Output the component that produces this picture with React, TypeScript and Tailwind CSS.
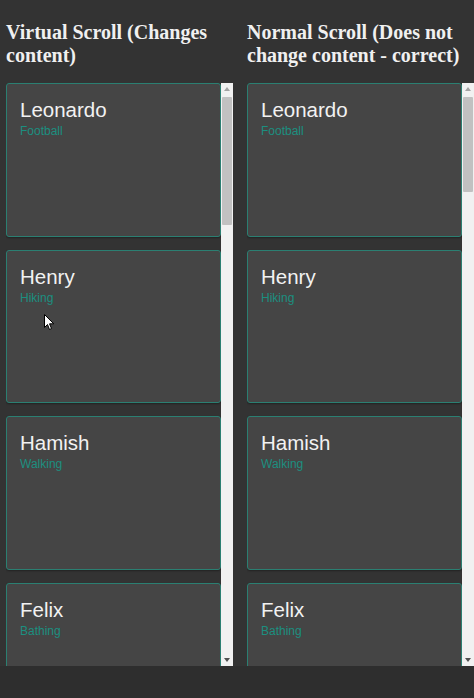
import React from 'react';

type Person = { name: string; hobby: string };

const people: Person[] = [
  { name: 'Leonardo', hobby: 'Football' },
  { name: 'Henry', hobby: 'Hiking' },
  { name: 'Hamish', hobby: 'Walking' },
  { name: 'Felix', hobby: 'Bathing' },
];

function Card({ person }: { person: Person }) {
  return (
    <div className="h-[153.67px] shrink-0 rounded-[3px] border border-[#2b7f72] bg-[#454545] px-[13px] pt-[14px] shadow-[0_1px_2px_rgba(0,0,0,0.35)]">
      <div className="text-[20.5px] leading-[23px] text-[#f2f2f2]">{person.name}</div>
      <div className="mt-[3px] text-[12px] leading-[14px] text-[#1c8f80]">{person.hobby}</div>
    </div>
  );
}

function Scrollbar({ thumbTop, thumbHeight }: { thumbTop: number; thumbHeight: number }) {
  return (
    <div className="flex w-[12px] shrink-0 flex-col bg-[#f1f1f1]">
      <div className="flex h-[12px] items-center justify-center">
        <svg width="6" height="4" viewBox="0 0 6 4">
          <path d="M0 4 L3 0 L6 4 Z" fill="#a3a3a3" />
        </svg>
      </div>
      <div className="flex-1 px-[1px]">
        <div className="rounded-[1px] bg-[#c1c1c1]" style={{ marginTop: thumbTop, height: thumbHeight }} />
      </div>
      <div className="flex h-[12px] items-center justify-center">
        <svg width="6" height="4" viewBox="0 0 6 4">
          <path d="M0 0 L6 0 L3 4 Z" fill="#505050" />
        </svg>
      </div>
    </div>
  );
}

function Column({ title, thumbHeight }: { title: string; thumbHeight: number }) {
  return (
    <div className="flex w-[227px] shrink-0 flex-col">
      <h2 className="mt-[21px] h-[62px] text-[20px] font-bold leading-[23px] text-[#f0f0f0] [font-family:'Liberation_Serif',serif]">
        {title}
      </h2>
      <div className="flex h-[583px]">
        <div className="flex flex-1 flex-col gap-[13px] overflow-hidden">
          {people.map((p) => (
            <Card key={p.name} person={p} />
          ))}
        </div>
        <Scrollbar thumbTop={2} thumbHeight={thumbHeight} />
      </div>
    </div>
  );
}

export default function App() {
  return (
    <div className="relative min-h-screen bg-[#2e2e2e] [font-family:'Liberation_Sans',Arial,sans-serif]">
      <div className="flex h-[666px] gap-[14px] bg-[#333333] pl-[6px]">
        <Column title="Virtual Scroll (Changes content)" thumbHeight={128} />
        <Column title="Normal Scroll (Does not change content - correct)" thumbHeight={95} />
      </div>

      {/* mouse pointer from the screenshot */}
      <svg className="absolute left-[44px] top-[314px]" width="11" height="17" viewBox="0 0 11 17">
        <path d="M0.5 0.5 L0.5 13.5 L3.5 10.5 L5.5 15.5 L7.5 14.5 L5.5 9.8 L9.8 9.8 Z" fill="#ffffff" stroke="#000000" strokeWidth="1" strokeLinejoin="round" />
      </svg>
    </div>
  );
}
